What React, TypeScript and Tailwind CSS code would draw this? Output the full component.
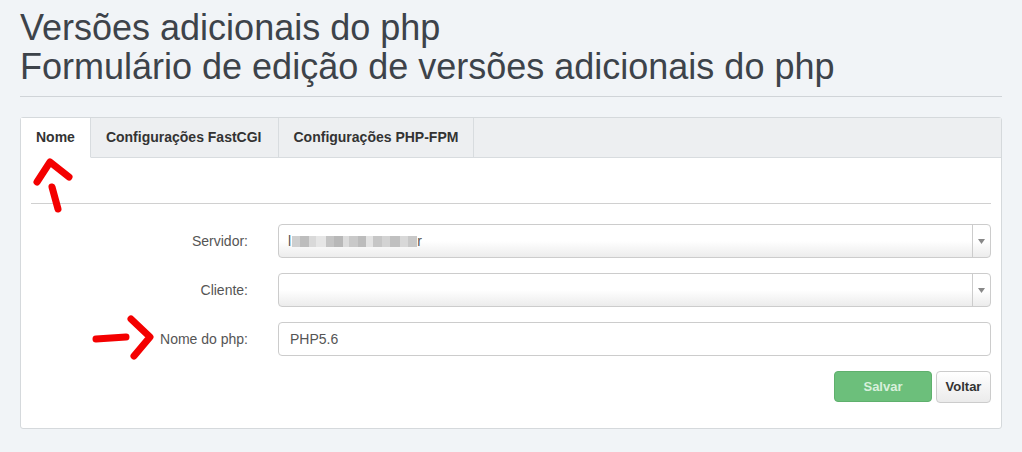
import React from 'react';

const font = { fontFamily: '"Liberation Sans", Arial, sans-serif' };

const blurBlocks: [number, string][] = [
  [8, '#cfcfcf'], [9, '#bdbdbd'], [7, '#d9d9d9'], [10, '#e6e6e6'], [8, '#c4c4c4'],
  [9, '#b8b8b8'], [6, '#dcdcdc'], [9, '#c9c9c9'], [8, '#bcbcbc'], [7, '#e3e3e3'],
  [9, '#c6c6c6'], [8, '#d3d3d3'], [10, '#c0c0c0'], [8, '#d8d8d8'], [9, '#c8c8c8'],
];

const SelectBox = ({ children }: { children?: React.ReactNode }) => (
  <div className="flex h-[34px] flex-1 items-stretch rounded-[4px] border border-[#cccccc] bg-gradient-to-b from-white from-50% to-[#ececec]">
    <div className="flex flex-1 items-center pl-[9px] text-[14px] text-[#555]">{children}</div>
    <div className="flex w-[18px] items-center justify-center border-l border-[#cccccc]">
      <svg width="7" height="5" viewBox="0 0 7 5">
        <path d="M0 0 H7 L3.5 5 Z" fill="#888" />
      </svg>
    </div>
  </div>
);

const FormRow = ({ label, children }: { label: string; children: React.ReactNode }) => (
  <div className="flex items-center">
    <label className="w-[217px] text-right text-[14px] text-[#555]">{label}</label>
    <div className="ml-[30px] flex flex-1">{children}</div>
  </div>
);

export default function App() {
  return (
    <div className="relative min-h-[452px] bg-[#f1f4f7] px-[20px] pt-[8px]" style={font}>
      <h1 className="text-[36px] leading-[39px] font-normal text-[#3d434a]">
        Versões adicionais do php
        <br />
        Formulário de edição de versões adicionais do php
      </h1>
      <div className="mt-[10px] h-px bg-[#d0d4d8]" />

      <div className="mt-[20px] rounded-[3px] border border-[#d5d9dc] bg-white">
        <div className="flex h-[40px] border-b border-[#d8dcdf] bg-[#edeff1] text-[14px] font-bold text-[#333]">
          <div className="-mb-px flex items-center border-r border-b border-[#d8dcdf] border-b-white bg-white px-[15px]">
            Nome
          </div>
          <div className="flex items-center border-r border-[#d8dcdf] pr-[16px] pl-[15px]">Configurações FastCGI</div>
          <div className="flex items-center border-r border-[#d8dcdf] px-[15px]">Configurações PHP-FPM</div>
        </div>

        <div className="px-[10px] pt-[10px] pb-[25px]">
          <div className="h-[36px] border-b border-[#d0d0d0]" />

          <div className="mt-[20px] flex flex-col gap-[15px]">
            <FormRow label="Servidor:">
              <SelectBox>
                <span>l</span>
                <span className="ml-[1px] flex h-[11px]">
                  {blurBlocks.map(([w, c], i) => (
                    <span key={i} style={{ width: w, backgroundColor: c }} className="h-full" />
                  ))}
                </span>
                <span>r</span>
              </SelectBox>
            </FormRow>
            <FormRow label="Cliente:">
              <SelectBox />
            </FormRow>
            <FormRow label="Nome do php:">
              <input
                defaultValue="PHP5.6"
                className="h-[34px] flex-1 rounded-[4px] border border-[#cccccc] bg-white px-[11px] text-[14px] text-[#555] outline-none"
                style={font}
              />
            </FormRow>
          </div>

          <div className="mt-[15px] flex justify-end gap-[4px]">
            <button className="h-[31px] w-[98px] rounded-[4px] border border-[#5fb06d] bg-[#6cbf7b] text-[13px] font-bold text-[#d8f0dc]">
              Salvar
            </button>
            <button className="h-[32px] w-[55px] rounded-[4px] border border-[#cccccc] bg-gradient-to-b from-white to-[#ebebeb] text-[13px] font-bold text-[#333]">
              Voltar
            </button>
          </div>
        </div>
      </div>

      <svg className="pointer-events-none absolute inset-0" width="1022" height="452">
        <g fill="none" stroke="#f40000" strokeWidth="7" strokeLinecap="round" strokeLinejoin="round">
          <path d="M37 182 L50 162 L69 177" />
          <path d="M52 187 Q55 198 58 209" />
          <path d="M96 339 L126 337" />
          <path d="M131 319 L150 337 L134 356" />
        </g>
      </svg>
    </div>
  );
}
